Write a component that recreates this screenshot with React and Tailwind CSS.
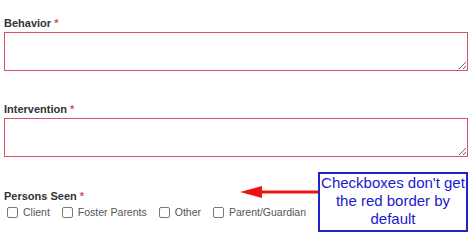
import React from 'react';

const Label = ({ children, className = '' }) => (
  <div className={`text-[11px] leading-[14px] font-bold text-[#333] ${className}`}>
    {children} <span className="text-[#d9534f]">*</span>
  </div>
);

const Check = ({ label }) => (
  <label className="flex items-center gap-[5px]">
    <input
      type="checkbox"
      className="appearance-none w-[11px] h-[11px] border border-[#777] rounded-[2px] bg-white m-0"
    />
    <span>{label}</span>
  </label>
);

export default function App() {
  const persons = ['Client', 'Foster Parents', 'Other', 'Parent/Guardian'];

  return (
    <div
      className="relative w-[474px] h-[247px] bg-white pl-[4px] pr-[6px] pt-[16px]"
      style={{ fontFamily: '"Liberation Sans", Arial, sans-serif' }}
    >
      {/* Behavior */}
      <Label>Behavior</Label>
      <textarea className="block mt-[2px] w-full h-[39px] border border-[#d65563] bg-white outline-none" />

      {/* Intervention */}
      <Label className="mt-[31px]">Intervention</Label>
      <textarea className="block mt-[2px] w-full h-[39px] border border-[#d65563] bg-white outline-none" />

      {/* Persons Seen */}
      <Label className="mt-[32px]">Persons Seen</Label>
      <div className="flex items-center gap-[12px] mt-[2px] pl-[3px] text-[10.5px] leading-[14px] text-[#555]">
        {persons.map((p) => (
          <Check key={p} label={p} />
        ))}
      </div>

      {/* Annotation arrow */}
      <svg className="absolute left-[238px] top-[184px]" width="82" height="16" viewBox="0 0 82 16">
        <line x1="22" y1="8" x2="81" y2="8" stroke="#ee1111" strokeWidth="3" />
        <polygon points="2,8 24,2 24,14" fill="#ee1111" />
      </svg>

      {/* Annotation callout */}
      <div className="absolute left-[318px] top-[172px] w-[150px] h-[60px] border-2 border-[#2222cc] bg-white text-center text-[15px] leading-[18px] text-[#1a1acc]">
        Checkboxes don't get
        <br />
        the red border by
        <br />
        default
      </div>
    </div>
  );
}
